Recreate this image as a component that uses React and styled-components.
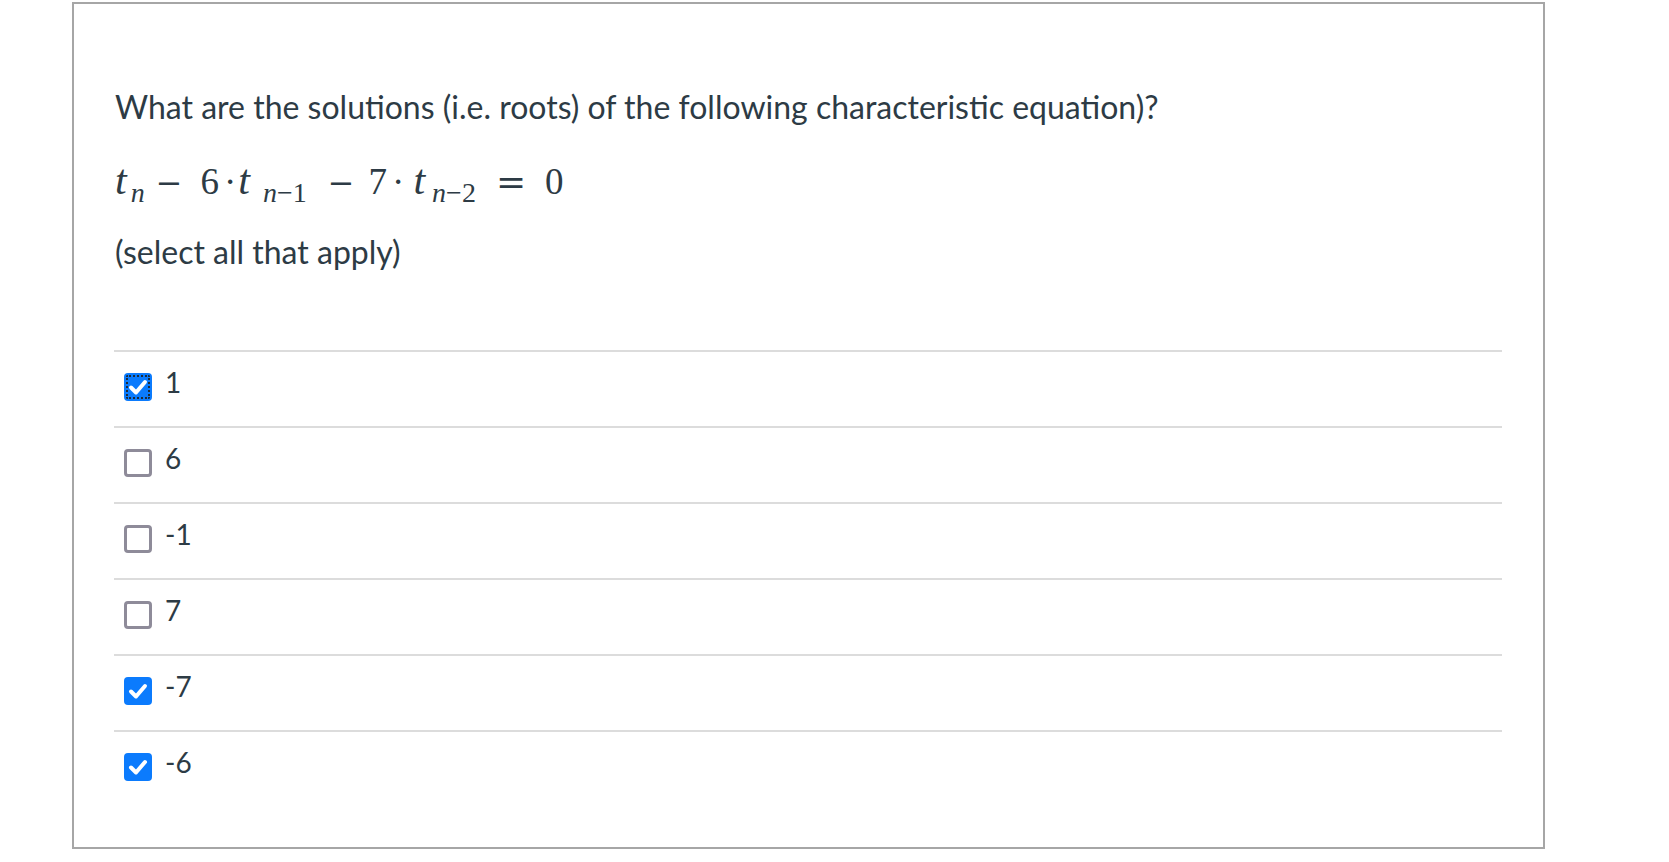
import React from "react";
import styled, { createGlobalStyle } from "styled-components";

const Global = createGlobalStyle`
  html, body { margin: 0; padding: 0; background: #ffffff; }
  body { font-family: Lato, "Open Sans", sans-serif; color: #2d3b45; }
`;

const Card = styled.section`
  box-sizing: border-box;
  margin: 2px 0 0 72px;
  width: 1473px;
  border: 2px solid #a6a6a6;
  padding: 82px 41px 41px 40px;
  background: #fff;
`;

const Para = styled.p`
  margin: 0 0 0 1px;
  font-size: 32px;
  line-height: 42px;
  color: #2d3b45;
`;

const Equation = styled.div`
  margin: 31px 0 30px 1px;
  height: 42px;
  line-height: 42px;
  font-family: "Liberation Serif", "DejaVu Serif", serif;
  font-size: 37px;
  color: #2d3b45;
  white-space: nowrap;
`;

const V = styled.span`
  font-style: italic;
  font-size: 42px;
`;

const Sub = styled.span`
  display: inline-block;
  font-size: 28px;
  line-height: 0;
  vertical-align: -8px;
  margin-left: ${(p) => p.$ml ?? 4}px;
  i { font-style: italic; }
`;

const Op = styled.span`
  display: inline-block;
  font-family: "DejaVu Serif", serif;
  font-size: ${(p) => p.$size || 32}px;
  margin: 0 ${(p) => p.$r ?? 18}px 0 ${(p) => p.$l ?? 12}px;
`;

const Dot = styled.span`
  display: inline-block;
  margin: 0 ${(p) => p.$r ?? 7}px 0 5px;
`;

const Options = styled.div`
  margin-top: 77px;
  display: flex;
  flex-direction: column;
`;

const Row = styled.label`
  display: flex;
  align-items: flex-start;
  gap: 13px;
  box-sizing: border-box;
  height: 76px;
  padding: 21px 0 0 10px;
  border-top: 2px solid #dcdcdc;
`;

const Box = styled.span`
  box-sizing: border-box;
  flex: none;
  width: 28px;
  height: 28px;
  border-radius: 4px;
  display: flex;
  align-items: center;
  justify-content: center;
  background: ${(p) => (p.$checked ? "#0b7bfd" : "#ffffff")};
  border: ${(p) => (p.$checked ? "none" : "3px solid #8e8b99")};
  outline: ${(p) => (p.$focus ? "2px dotted #1d2b38" : "none")};
  outline-offset: -4px;
`;

const Label = styled.span`
  font-size: 28px;
  line-height: 28px;
  margin-top: -5px;
  color: #2d3b45;
`;

const Check = () => (
  <svg width="22" height="22" viewBox="0 0 22 22">
    <polyline
      points="4,11.5 9,16.5 18,6"
      fill="none"
      stroke="#fff"
      strokeWidth="4"
      strokeLinecap="round"
      strokeLinejoin="round"
    />
  </svg>
);

const options = [
  { label: "1", checked: true, focus: true },
  { label: "6", checked: false },
  { label: "-1", checked: false },
  { label: "7", checked: false },
  { label: "-7", checked: true },
  { label: "-6", checked: true },
];

export default function App() {
  return (
    <>
      <Global />
      <Card>
        <Para>
          What are the solutions (i.e. roots) of the following characteristic equation)?
        </Para>
        <Equation>
          <V>t</V>
          <Sub $ml={4}><i>n</i></Sub>
          <Op $l={11} $r={18}>−</Op>
          6
          <Dot $r={2}>·</Dot>
          <V>t</V>
          <Sub $ml={13}><i>n</i>−1</Sub>
          <Op $l={21} $r={14}>−</Op>
          7
          <Dot $r={9}>·</Dot>
          <V>t</V>
          <Sub $ml={7}><i>n</i>−2</Sub>
          <Op $size={36} $l={20} $r={19}>=</Op>
          0
        </Equation>
        <Para>(select all that apply)</Para>
        <Options>
          {options.map((o) => (
            <Row key={o.label}>
              <Box $checked={o.checked} $focus={o.focus}>
                {o.checked && <Check />}
              </Box>
              <Label>{o.label}</Label>
            </Row>
          ))}
        </Options>
      </Card>
    </>
  );
}
